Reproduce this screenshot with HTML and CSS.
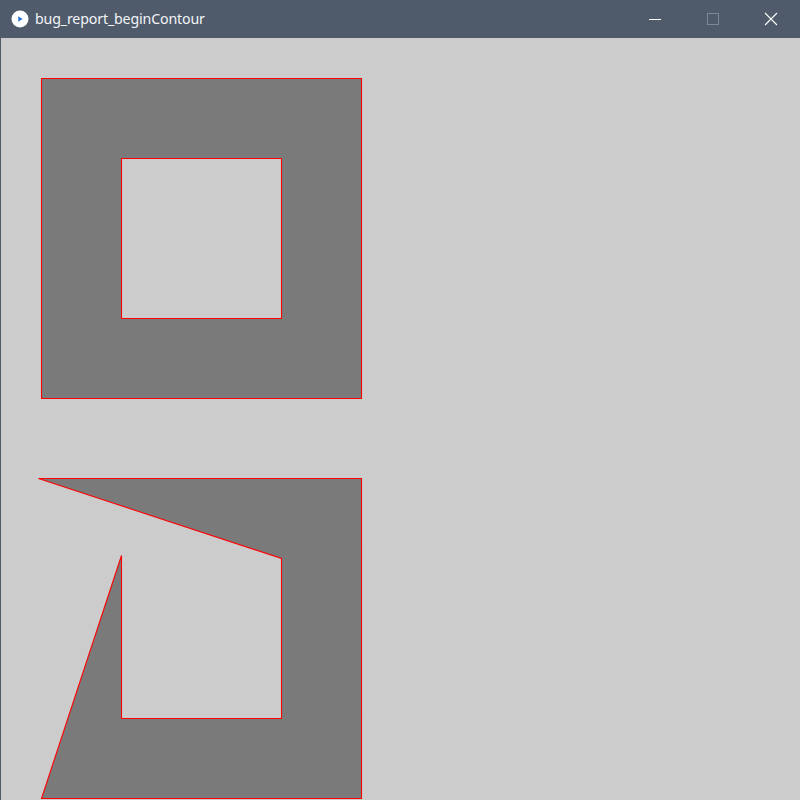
FILE: index.html
```html
<!DOCTYPE html>
<html>
<head>
<meta charset="utf-8">
<link rel="stylesheet" href="styles.css">
</head>
<body>
<div class="window">
  <div class="titlebar">
    <div class="app">
      <svg class="app-icon" width="18" height="18" viewBox="0 0 18 18">
        <circle cx="9" cy="9" r="8.5" fill="#ffffff"/>
        <path d="M7.3 6.3 L11.6 9 L7.3 11.7 Z" fill="#1f6fd6"/>
      </svg>
      <span class="title">bug_report_beginContour</span>
    </div>
    <div class="controls">
      <div class="ctrl">
        <svg width="14" height="14" viewBox="0 0 14 14"><path d="M1 7.5 H13" stroke="#ffffff" stroke-width="1"/></svg>
      </div>
      <div class="ctrl">
        <svg width="14" height="14" viewBox="0 0 14 14"><rect x="1.5" y="1.5" width="11" height="11" fill="none" stroke="#7d8896" stroke-width="1"/></svg>
      </div>
      <div class="ctrl">
        <svg width="14" height="14" viewBox="0 0 14 14"><path d="M1 1 L13 13 M13 1 L1 13" stroke="#ffffff" stroke-width="1.1"/></svg>
      </div>
    </div>
  </div>
  <div class="client">
    <div class="edge"></div>
    <svg class="canvas" width="799" height="762" viewBox="0 0 799 762">
      <path class="shape" fill-rule="evenodd"
        d="M40.5 40.5 H360.5 V360.5 H40.5 Z M120.5 120.5 H280.5 V280.5 H120.5 Z"/>
      <path class="shape" fill-rule="evenodd"
        d="M37.5 440.5 L360.5 440.5 L360.5 760.5 L40.5 760.5 L120.5 517.5 L120.5 680.5 L280.5 680.5 L280.5 520.5 Z"/>
    </svg>
  </div>
</div>
</body>
</html>
```

FILE: styles.css
```css
html, body {
  margin: 0;
  padding: 0;
  width: 800px;
  height: 800px;
  overflow: hidden;
  background: #cccccc;
}
.window {
  display: flex;
  flex-direction: column;
  width: 800px;
  height: 800px;
}
.titlebar {
  height: 38px;
  flex: 0 0 38px;
  background: #4f5b6a;
  display: flex;
  align-items: center;
  justify-content: space-between;
}
.app {
  display: flex;
  align-items: center;
  padding-left: 11px;
}
.app-icon {
  display: block;
}
.title {
  margin-left: 6px;
  color: #f2f4f7;
  font-family: "Noto Sans", "Open Sans", sans-serif;
  font-size: 14.2px;
  letter-spacing: -0.15px;
  line-height: 38px;
}
.controls {
  display: flex;
  height: 38px;
}
.ctrl {
  width: 58px;
  height: 38px;
  display: flex;
  align-items: center;
  justify-content: center;
}
.ctrl svg {
  display: block;
}
.client {
  flex: 1;
  display: flex;
  overflow: hidden;
}
.edge {
  width: 1px;
  flex: 0 0 1px;
  background: #4f5b6a;
}
.canvas {
  display: block;
  background: #cccccc;
}
.shape {
  fill: #7a7a7a;
  stroke: #ff0000;
  stroke-width: 1.1;
}
```
